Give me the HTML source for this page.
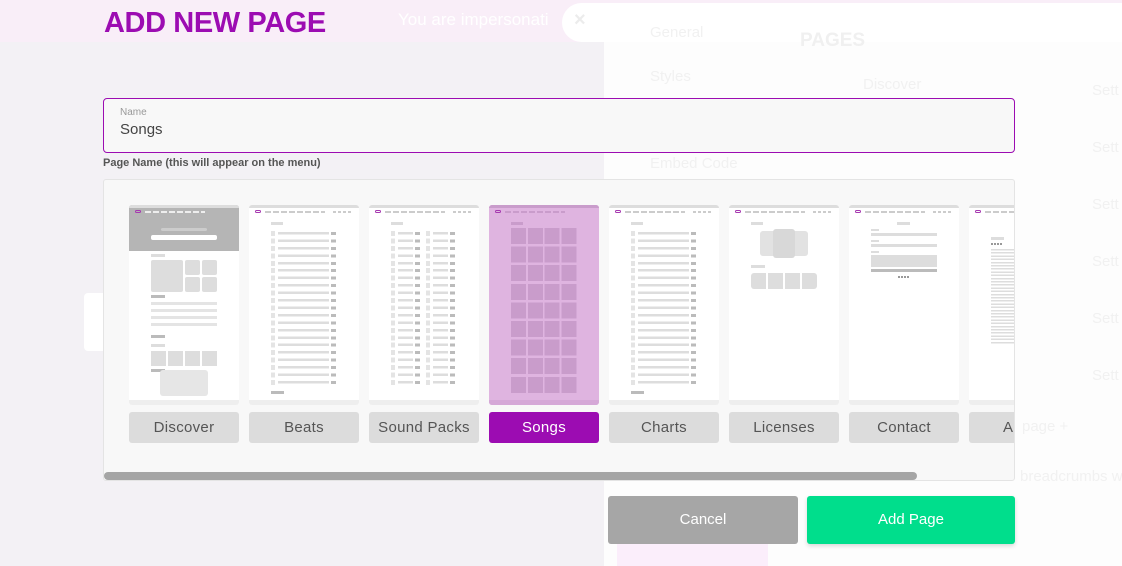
<!DOCTYPE html>
<html><head><meta charset="utf-8"><style>
*{box-sizing:border-box;margin:0;padding:0}
body{width:1122px;height:566px;overflow:hidden;position:relative;font-family:"Liberation Sans",sans-serif;background:#f3f1f5}
.a{position:absolute}
.card{position:absolute;top:205px;width:110px;height:200px;background:#fff;border-radius:3px;overflow:hidden}
.card .tb{position:absolute;left:0;top:0;width:110px;height:3px;background:#ddd}
.card .bb{position:absolute;left:0;bottom:0;width:110px;height:5px;background:#eee}
.card .logo{position:absolute;left:6px;top:5px;width:6px;height:3px;border:1px solid #a63ab0;border-radius:2px}
.card .nav{position:absolute;left:16px;top:6px;width:60px;height:2px;background:repeating-linear-gradient(to right,#ccc 0 6px,transparent 6px 8px)}
.card .nav2{position:absolute;right:6px;top:6px;width:20px;height:2px;background:repeating-linear-gradient(to right,#ccc 0 3px,transparent 3px 5px)}
.lbl{position:absolute;top:412px;width:110px;height:31px;background:#dcdcdc;border-radius:3px;color:#555;font-size:15px;text-align:center;line-height:31px;letter-spacing:.3px}
.rows{position:absolute;height:156px}
.ft{color:#f1f1f1;font-size:15px;white-space:nowrap}
</style></head><body>
<div class="a" style="left:0;top:0;width:1122px;height:42px;background:#f9eef8"></div>
<div class="a" style="left:604px;top:42px;width:518px;height:524px;background:#fdfdfd"></div>
<div class="a" style="left:562px;top:3px;width:560px;height:39px;background:#fff;border-radius:20px 0 0 20px"></div>
<div class="a" style="left:398px;top:10px;color:#fff;font-size:17px;white-space:nowrap">You are impersonati</div>
<div class="a" style="left:574px;top:9px;color:#ececec;font-size:20px;font-weight:bold">×</div>
<div class="a ft" style="left:650px;top:24px">General</div>
<div class="a ft" style="left:650px;top:68px">Styles</div>
<div class="a ft" style="left:650px;top:155px">Embed Code</div>
<div class="a" style="left:800px;top:30px;color:#f0f0f0;font-size:19px;font-weight:bold">PAGES</div>
<div class="a ft" style="left:863px;top:76px">Discover</div>
<div class="a ft" style="left:1092px;top:82px">Sett</div>
<div class="a ft" style="left:1092px;top:139px">Sett</div>
<div class="a ft" style="left:1092px;top:196px">Sett</div>
<div class="a ft" style="left:1092px;top:253px">Sett</div>
<div class="a ft" style="left:1092px;top:310px">Sett</div>
<div class="a ft" style="left:1092px;top:367px">Sett</div>
<div class="a ft" style="left:1022px;top:418px">page +</div>
<div class="a ft" style="left:1020px;top:468px">breadcrumbs wi</div>
<div class="a" style="left:617px;top:544px;width:151px;height:22px;background:#fbeefb"></div>
<div class="a" style="left:84px;top:293px;width:20px;height:58px;background:#fff;border-radius:4px 0 0 4px"></div>

<div class="a" style="left:104px;top:7px;color:#9c0cb2;font-size:29px;font-weight:bold;letter-spacing:-.4px">ADD NEW PAGE</div>

<div class="a" style="left:103px;top:98px;width:912px;height:55px;background:#f8f8f8;border:1px solid #9c0cb2;border-radius:4px"></div>
<div class="a" style="left:120px;top:107px;color:#999;font-size:10px">Name</div>
<div class="a" style="left:120px;top:121px;color:#444;font-size:15px">Songs</div>
<div class="a" style="left:103px;top:157px;color:#555;font-size:11px;font-weight:bold">Page Name (this will appear on the menu)</div>

<div class="a" style="left:103px;top:179px;width:912px;height:302px;background:#f8f8f8;border:1px solid #e4e4e4;border-radius:3px;overflow:hidden">
<div class="a" style="left:0;top:292px;width:813px;height:8px;background:#a5a5a5;border-radius:4px"></div>
</div>

<div class="card" style="left:129px">
<div class="a" style="left:0;top:0;width:110px;height:46px;background:#b5b5b5"></div>
<div class="logo"></div><div class="nav" style="background:repeating-linear-gradient(to right,#eee 0 6px,transparent 6px 8px)"></div>
<div class="a" style="left:32px;top:23px;width:46px;height:3px;background:#ccc;border-radius:2px"></div>
<div class="a" style="left:22px;top:30px;width:66px;height:5px;background:#fff;border-radius:2px"></div>
<div class="a" style="left:22px;top:49px;width:14px;height:3px;background:#ddd"></div>
<div class="a" style="left:22px;top:55px;width:32px;height:32px;background:#ddd;border-radius:2px"></div>
<div class="a" style="left:56px;top:55px;width:15px;height:15px;background:#ddd;border-radius:2px"></div>
<div class="a" style="left:73px;top:55px;width:15px;height:15px;background:#ddd;border-radius:2px"></div>
<div class="a" style="left:56px;top:72px;width:15px;height:15px;background:#ddd;border-radius:2px"></div>
<div class="a" style="left:73px;top:72px;width:15px;height:15px;background:#ddd;border-radius:2px"></div>
<div class="a" style="left:22px;top:90px;width:14px;height:3px;background:#bbb"></div>
<div class="rows" style="left:22px;top:97px;width:66px;height:28px;background:repeating-linear-gradient(to bottom,#e4e4e4 0 3px,transparent 3px 7px)"></div>
<div class="a" style="left:22px;top:130px;width:14px;height:3px;background:#bbb"></div>
<div class="a" style="left:22px;top:139px;width:14px;height:3px;background:#ddd"></div>
<div class="a" style="left:22px;top:146px;width:66px;height:15px;background:repeating-linear-gradient(to right,#ddd 0 15px,transparent 15px 17px)"></div>
<div class="a" style="left:22px;top:164px;width:14px;height:3px;background:#bbb"></div>
<div class="a" style="left:31px;top:165px;width:48px;height:26px;background:#e6e6e6;border-radius:3px"></div>
<div class="tb"></div><div class="bb"></div>
</div>
<div class="lbl" style="left:129px">Discover</div>

<div class="card" style="left:249px">
<div class="tb"></div><div class="logo"></div><div class="nav"></div><div class="nav2"></div>
<div class="a" style="left:22px;top:17px;width:12px;height:3px;background:#ddd"></div>
<div class="rows" style="left:22px;top:26px;width:4px;background:repeating-linear-gradient(to bottom,#e4e4e4 0 5px,transparent 5px 7.45px)"></div>
<div class="rows" style="left:29px;top:27px;width:51px;background:repeating-linear-gradient(to bottom,#ddd 0 2.5px,transparent 2.5px 7.45px)"></div>
<div class="rows" style="left:82px;top:27px;width:5px;background:repeating-linear-gradient(to bottom,#bbb 0 3px,transparent 3px 7.45px)"></div>
<div class="a" style="left:22px;top:186px;width:13px;height:3px;background:#bbb"></div>
<div class="bb"></div>
</div>
<div class="lbl" style="left:249px">Beats</div>

<div class="card" style="left:369px">
<div class="tb"></div><div class="logo"></div><div class="nav"></div><div class="nav2"></div>
<div class="a" style="left:22px;top:17px;width:12px;height:3px;background:#ddd"></div>
<div class="rows" style="left:22px;top:26px;width:4px;background:repeating-linear-gradient(to bottom,#e4e4e4 0 5px,transparent 5px 7.45px)"></div>
<div class="rows" style="left:29px;top:27px;width:15px;background:repeating-linear-gradient(to bottom,#ddd 0 2.5px,transparent 2.5px 7.45px)"></div>
<div class="rows" style="left:46px;top:27px;width:5px;background:repeating-linear-gradient(to bottom,#bbb 0 3px,transparent 3px 7.45px)"></div>
<div class="rows" style="left:57px;top:26px;width:4px;background:repeating-linear-gradient(to bottom,#e4e4e4 0 5px,transparent 5px 7.45px)"></div>
<div class="rows" style="left:64px;top:27px;width:15px;background:repeating-linear-gradient(to bottom,#ddd 0 2.5px,transparent 2.5px 7.45px)"></div>
<div class="rows" style="left:81px;top:27px;width:5px;background:repeating-linear-gradient(to bottom,#bbb 0 3px,transparent 3px 7.45px)"></div>
<div class="bb"></div>
</div>
<div class="lbl" style="left:369px">Sound Packs</div>

<div class="card" style="left:489px;background:#dfb4e0">
<div class="tb" style="background:#c99ccb"></div><div class="logo"></div><div class="nav" style="background:repeating-linear-gradient(to right,#c99ccb 0 6px,transparent 6px 8px)"></div>
<div class="a" style="left:22px;top:17px;width:12px;height:3px;background:#c99ccb"></div>
<div class="a" style="left:22px;top:23px;width:66px;height:166px;background:repeating-linear-gradient(to bottom,transparent 0 16px,#dfb4e0 16px 18.6px),repeating-linear-gradient(to right,#c99ccb 0 15px,transparent 15px 16.8px)"></div>
<div class="bb" style="background:#d5a8d7"></div>
</div>
<div class="lbl" style="left:489px;background:#9c0cb2;color:#fff">Songs</div>

<div class="card" style="left:609px">
<div class="tb"></div><div class="logo"></div><div class="nav"></div><div class="nav2"></div>
<div class="a" style="left:22px;top:17px;width:12px;height:3px;background:#ddd"></div>
<div class="rows" style="left:22px;top:26px;width:4px;background:repeating-linear-gradient(to bottom,#e4e4e4 0 5px,transparent 5px 7.45px)"></div>
<div class="rows" style="left:29px;top:27px;width:51px;background:repeating-linear-gradient(to bottom,#ddd 0 2.5px,transparent 2.5px 7.45px)"></div>
<div class="rows" style="left:82px;top:27px;width:5px;background:repeating-linear-gradient(to bottom,#bbb 0 3px,transparent 3px 7.45px)"></div>
<div class="a" style="left:22px;top:186px;width:13px;height:3px;background:#bbb"></div>
<div class="bb"></div>
</div>
<div class="lbl" style="left:609px">Charts</div>

<div class="card" style="left:729px">
<div class="tb"></div><div class="logo"></div><div class="nav"></div><div class="nav2"></div>
<div class="a" style="left:22px;top:17px;width:12px;height:3px;background:#ddd"></div>
<div class="a" style="left:31px;top:26px;width:48px;height:25px;background:#e2e2e2;border-radius:3px"></div>
<div class="a" style="left:44px;top:24px;width:22px;height:29px;background:#d8d8d8;border-radius:3px"></div>
<div class="a" style="left:22px;top:60px;width:14px;height:3px;background:#ddd"></div>
<div class="a" style="left:22px;top:68px;width:66px;height:16px;background:repeating-linear-gradient(to right,#ddd 0 15px,transparent 15px 17px);border-radius:3px"></div>
<div class="bb"></div>
</div>
<div class="lbl" style="left:729px">Licenses</div>

<div class="card" style="left:849px">
<div class="tb"></div><div class="logo"></div><div class="nav"></div><div class="nav2"></div>
<div class="a" style="left:48px;top:17px;width:13px;height:3px;background:#ddd"></div>
<div class="a" style="left:22px;top:24px;width:8px;height:2px;background:#ddd"></div>
<div class="a" style="left:22px;top:28px;width:66px;height:3px;background:#ddd"></div>
<div class="a" style="left:22px;top:35px;width:8px;height:2px;background:#ddd"></div>
<div class="a" style="left:22px;top:39px;width:66px;height:3px;background:#ddd"></div>
<div class="a" style="left:22px;top:46px;width:8px;height:2px;background:#ddd"></div>
<div class="a" style="left:22px;top:50px;width:66px;height:12px;background:#ddd"></div>
<div class="a" style="left:22px;top:64px;width:66px;height:3px;background:#bbb"></div>
<div class="a" style="left:49px;top:71px;width:12px;height:2px;background:repeating-linear-gradient(to right,#999 0 2px,transparent 2px 3px)"></div>
<div class="bb"></div>
</div>
<div class="lbl" style="left:849px">Contact</div>

<div class="card" style="left:969px;width:45px;border-radius:3px 0 0 3px">
<div class="tb"></div><div class="logo"></div><div class="nav"></div>
<div class="a" style="left:22px;top:32px;width:13px;height:3px;background:#ddd"></div>
<div class="a" style="left:22px;top:38px;width:12px;height:2px;background:repeating-linear-gradient(to right,#999 0 2px,transparent 2px 3px)"></div>
<div class="a" style="left:22px;top:44px;width:23px;height:96px;background:repeating-linear-gradient(to bottom,#ddd 0 1.5px,transparent 1.5px 3.2px)"></div>
<div class="bb"></div>
</div>
<div class="lbl" style="left:969px;width:45px;border-radius:3px 0 0 3px;text-align:left;padding-left:34px;overflow:hidden">Al</div>

<div class="a" style="left:608px;top:496px;width:190px;height:48px;background:#a6a6a6;border-radius:3px;color:#fff;font-size:15px;text-align:center;line-height:48px">Cancel</div>
<div class="a" style="left:807px;top:496px;width:208px;height:48px;background:#00de8c;border-radius:3px;color:#fff;font-size:15px;text-align:center;line-height:48px;box-shadow:0 2px 4px rgba(0,0,0,.15)">Add Page</div>
</body></html>
